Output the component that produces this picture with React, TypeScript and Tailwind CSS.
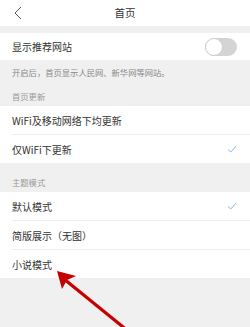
import React from "react";

const font = { fontFamily: '"Noto Sans CJK SC", "Noto Sans", sans-serif' };

function Check() {
  return (
    <svg width="10" height="8" viewBox="0 0 10 8" className="mr-[13px]">
      <path d="M1 4.5 L3.8 7 L9 1" fill="none" stroke="#8ab8e6" strokeWidth="1" />
    </svg>
  );
}

function Row({ label, check, last }: { label: string; check?: boolean; last?: boolean }) {
  return (
    <div className="pl-3 bg-white">
      <div
        className={
          "flex items-center justify-between text-[10px] text-[#333] " +
          (last ? "h-[28px]" : "h-[29px] border-b border-[#eeeeee]")
        }
      >
        <span>{label}</span>
        {check && <Check />}
      </div>
    </div>
  );
}

export default function App() {
  return (
    <div className="relative w-[250px] h-[327px] overflow-hidden bg-[#f0f0f0]" style={font}>
      <div className="h-[26px] bg-white flex items-center relative">
        <svg width="10" height="14" viewBox="0 0 10 14" className="ml-[13px]">
          <path d="M8 1 L2 7 L8 13" fill="none" stroke="#555" strokeWidth="1" />
        </svg>
        <div className="absolute inset-0 flex items-center justify-center text-[10.5px] text-[#333]">首页</div>
      </div>
      <div className="h-[7px]" />
      <div className="h-[27px] bg-white flex items-center justify-between pl-3 pr-[13px]">
        <span className="text-[10px] text-[#333]">显示推荐网站</span>
        <div className="w-[32px] h-[18px] rounded-full bg-[#d4d4d4] relative">
          <div className="absolute left-0 top-0 w-[18px] h-[18px] rounded-full bg-white border border-[#cfcfcf]" />
        </div>
      </div>
      <div className="h-[25px] flex items-center pl-3 text-[8.3px] text-[#888]">开启后，首页显示人民网、新华网等网站。</div>
      <div className="h-[21px] flex items-end pb-[4px] pl-3 text-[8.3px] text-[#999]">首页更新</div>
      <Row label="WiFi及移动网络下均更新" />
      <Row label="仅WiFi下更新" check last />
      <div className="h-[29px] flex items-end pb-[4px] pl-3 text-[8.3px] text-[#999]">主题模式</div>
      <Row label="默认模式" check />
      <Row label="简版展示（无图）" />
      <Row label="小说模式" last />
      <svg className="absolute left-0 top-0" width="250" height="327" viewBox="0 0 250 327">
        <line x1="64" y1="279" x2="128" y2="331" stroke="#c60000" strokeWidth="3.2" />
        <polygon points="57,271 76,276 67,280 62,289" fill="#c60000" />
      </svg>
    </div>
  );
}
